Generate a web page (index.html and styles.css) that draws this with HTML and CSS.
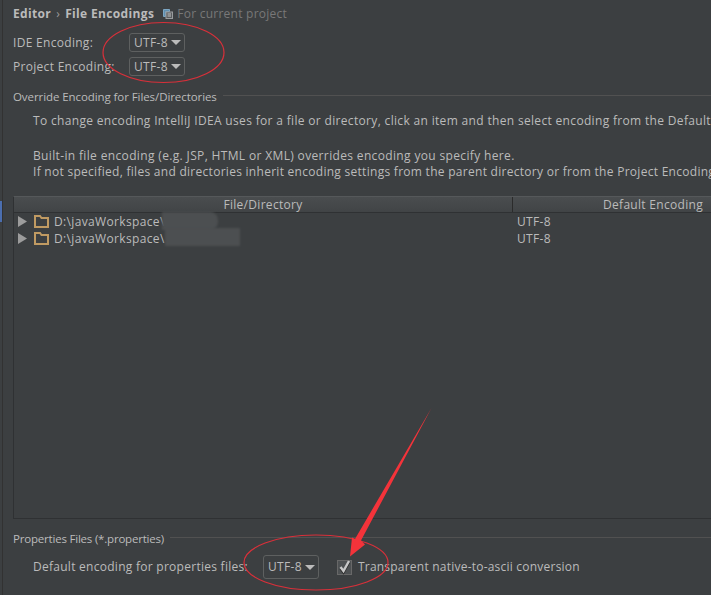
FILE: index.html
```html
<!DOCTYPE html>
<html lang="en">
<head>
<meta charset="utf-8">
<title>File Encodings</title>
<link rel="stylesheet" href="styles.css">
</head>
<body>
<div class="page">
  <span class="nav-marker"></span>
  <header class="crumbs">
    <strong>Editor</strong><span class="sep">›</span><strong>File Encodings</strong>
    <svg class="copy-icon" width="10" height="10" viewBox="0 0 10 10"><path d="M.5.5h6v2h-4v5h-2z" fill="#5f8fb0" stroke="#7da7c4"/><rect x="3" y="3" width="6.5" height="6.5" fill="#5a5d5f" stroke="#9a9c9e"/><path d="M4.500 5h3.500M4.500 7h3.500" stroke="#c8c8c8"/></svg>
    <span class="scope">For current project</span>
  </header>

  <div class="enc-grid">
    <label>IDE Encoding:</label><span class="combo">UTF-8<i class="caret"></i></span>
    <label>Project Encoding:</label><span class="combo">UTF-8<i class="caret"></i></span>
  </div>

  <div class="group-title override-title"><span>Override Encoding for Files/Directories</span><i></i></div>
  <div class="help">
    <p class="line-a">To change encoding IntelliJ IDEA uses for a file or directory, click an item and then select encoding from the Default Encoding column.</p>
    <p class="gap">Built-in file encoding (e.g. JSP, HTML or XML) overrides encoding you specify here.</p>
    <p class="line-c">If not specified, files and directories inherit encoding settings from the parent directory or from the Project Encoding.</p>
  </div>

  <section class="table">
    <div class="thead"><div class="th first">File/Directory</div><div class="th second">Default Encoding</div></div>
    <div class="row">
      <div class="cell-path">
        <svg class="tri" width="9" height="11" viewBox="0 0 9 11"><path d="M0 0l9 5.500-9 5.500z" fill="#9c9c9c"/></svg>
        <svg class="folder" width="15" height="13" viewBox="0 0 15 13"><path d="M1 12V1h5l1.500 2H14v9z" fill="none" stroke="#c09a62" stroke-width="2"/></svg>
        <span>D:\javaWorkspace\</span>
        <i class="blur blur-a"></i>
      </div>
      <div class="cell-enc">UTF-8</div>
    </div>
    <div class="row">
      <div class="cell-path">
        <svg class="tri" width="9" height="11" viewBox="0 0 9 11"><path d="M0 0l9 5.500-9 5.500z" fill="#9c9c9c"/></svg>
        <svg class="folder" width="15" height="13" viewBox="0 0 15 13"><path d="M1 12V1h5l1.500 2H14v9z" fill="none" stroke="#c09a62" stroke-width="2"/></svg>
        <span>D:\javaWorkspace\</span>
        <i class="blur blur-b"></i>
      </div>
      <div class="cell-enc">UTF-8</div>
    </div>
  </section>

  <div class="group-title props-title"><span>Properties Files (*.properties)</span><i></i></div>
  <div class="props-row">
    <label class="props-label">Default encoding for properties files:</label>
    <span class="combo">UTF-8<i class="caret"></i></span>
    <span class="check"><svg width="15" height="15" viewBox="0 0 15 15"><rect x=".5" y=".5" width="14" height="14" fill="#4e5153" stroke="#686868"/><path d="M3.500 8.500l3 4 5.500-10" fill="none" stroke="#2b2b2b" stroke-width="2.500"/><path d="M3.500 7l3 4 5.500-10" fill="none" stroke="#c8c8c8" stroke-width="2.400"/></svg></span>
    <label class="check-label">Transparent native-to-ascii conversion</label>
  </div>

  <svg class="markup" width="711" height="595" viewBox="0 0 711 595">
    <ellipse cx="163.500" cy="52.500" rx="60.500" ry="30" fill="none" stroke="#d8303a" stroke-width="1.200"/>
    <ellipse cx="316" cy="562.500" rx="72" ry="27.500" fill="none" stroke="#d8303a" stroke-width="1.200"/>
    <path d="M431.500 408L361 540.500l4 4L350 556.500l2-19 3 1.500z" fill="#f4333a"/>
  </svg>
</div>
</body>
</html>
```
FILE: styles.css
```css
* { box-sizing: border-box; }
html, body { margin: 0; height: 100%; overflow: hidden; background: #3c3f41; }
.page {
  position: relative;
  width: 711px;
  height: 595px;
  overflow: hidden;
  padding-left: 13px;
  background: #3c3f41;
  color: #bbbbbb;
  font: 12px/16px "Open Sans", "Noto Sans", sans-serif;
  letter-spacing: 0.35px;
  white-space: nowrap;
}
.page::before {
  content: "";
  position: absolute;
  left: 2px;
  top: 0;
  bottom: 0;
  width: 1px;
  background: #323232;
}
.nav-marker {
  position: absolute;
  left: 0;
  top: 201px;
  width: 2px;
  height: 21px;
  background: #4b6eaf;
}
.crumbs {
  display: flex;
  align-items: center;
  height: 16px;
  margin-top: 6px;
}
.crumbs strong { font-weight: 700; color: #bbbbbb; }
.sep { margin: 0 5px; color: #9a9a9a; }
.copy-icon { margin: 0 4px 0 9px; }
.scope { color: #787878; letter-spacing: 0.25px; }
.enc-grid {
  display: grid;
  grid-template-columns: 116px 56px;
  grid-auto-rows: 19px;
  row-gap: 5px;
  align-items: center;
  margin-top: 11px;
  letter-spacing: 0.3px;
}
.combo {
  display: inline-flex;
  align-items: center;
  width: 56px;
  height: 19px;
  padding-left: 4px;
  border: 1px solid #5e6060;
  border-radius: 3px;
  color: #bbbbbb;
  letter-spacing: 0.35px;
}
.caret {
  width: 0;
  height: 0;
  margin-left: 3px;
  border-left: 5px solid transparent;
  border-right: 5px solid transparent;
  border-top: 5px solid #bbbbbb;
}
.group-title {
  display: flex;
  align-items: center;
  height: 16px;
  font-size: 11.5px;
}
.group-title i {
  flex: 1;
  height: 1px;
  margin: 0 0 3px 6px;
  background: #515151;
}
.override-title { margin-top: 13px; letter-spacing: -0.08px; }
.help { margin-top: 8px; padding-left: 20px; }
.help p { margin: 0; height: 16px; }
.help p.gap { margin-top: 19px; }
.help p.line-a { letter-spacing: 0.33px; }
.help p.line-c { letter-spacing: 0.28px; }
.table {
  width: 780px;
  height: 323px;
  margin-top: 16px;
  border-left: 1px solid #2f3133;
  border-bottom: 1px solid #2f3133;
  border-top: 1px solid #55585a;
}
.thead {
  display: flex;
  height: 16px;
  background: linear-gradient(#4a4d4f, #414446);
  border-bottom: 1px solid #2f3133;
}
.th { text-align: center; line-height: 15px; letter-spacing: 0.3px; }
.first { width: 499px; border-right: 1px solid #2b2b2b; }
.second { flex: 1; }
.row {
  display: flex;
  align-items: center;
  height: 17px;
}
.cell-path {
  display: flex;
  align-items: center;
  width: 503px;
  padding-left: 4px;
  position: relative;
}
.tri { margin-right: 7px; }
.folder { margin-right: 5px; }
.blur {
  position: absolute;
  display: block;
  height: 18px;
  background: #4c4f51;
  filter: blur(1px);
}
.blur-a { left: 148px; top: -2px; width: 56px; border-radius: 0 8px 8px 0; }
.blur-b { left: 151px; top: -3px; width: 75px; }
.props-title { margin-top: 12px; letter-spacing: -0.2px; }
.props-row {
  display: flex;
  align-items: center;
  height: 24px;
  margin-top: 8px;
  padding-left: 20px;
}
.props-label { letter-spacing: 0.27px; }
.check-label { letter-spacing: 0.22px; }
.props-row .combo { height: 24px; margin-left: 15px; }
.check { display: flex; margin: 0 6px 0 18px; }
.markup { position: absolute; left: 0; top: 0; pointer-events: none; }
```
